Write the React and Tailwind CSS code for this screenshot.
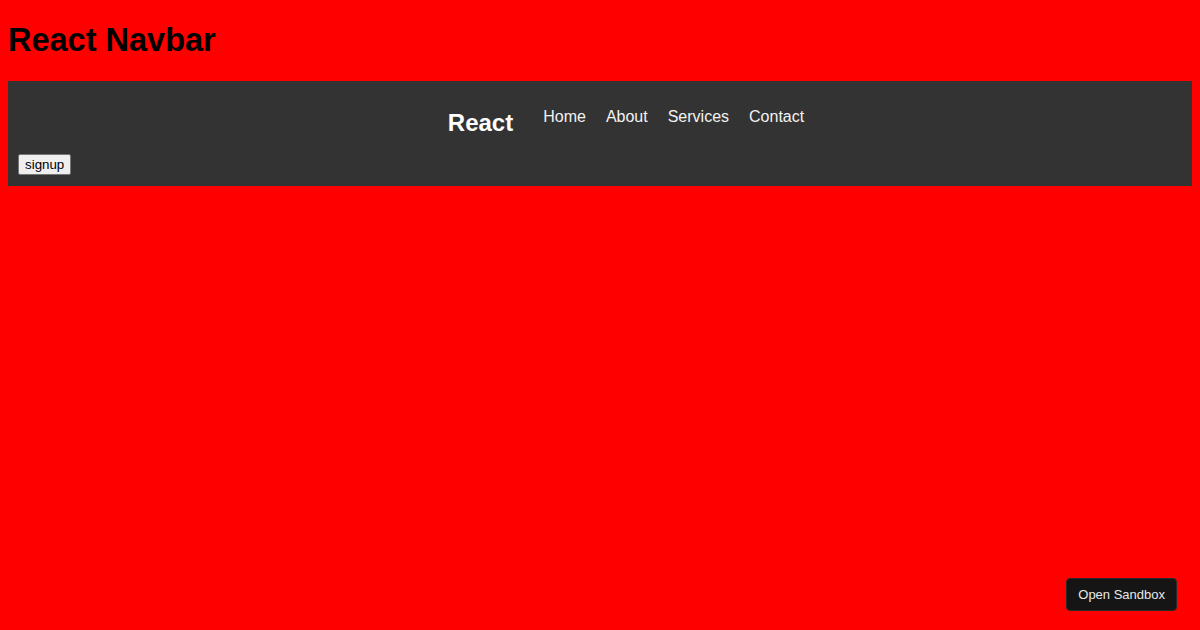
import React from "react";

const LINKS = ["Home", "About", "Services", "Contact"];

export default function App() {
  return (
    <div className="min-h-screen bg-[#ff0000] px-2 pt-2 font-['Liberation_Sans',Arial,sans-serif] text-black">
      <h1 className="mt-[14px] mb-[22px] text-[32.5px] font-bold leading-[37px]">
        React Navbar
      </h1>

      {/* navbar */}
      <nav className="bg-[#333333] p-[10px] pb-[11px]">
        <div className="flex h-[63px] items-start justify-center pl-[52px]">
          <div className="mt-[18px] text-[24px] font-bold leading-[28px] text-white">
            React
          </div>
          <ul className="ml-[30px] mt-[14px] flex gap-5">
            {LINKS.map((l) => (
              <li key={l}>
                <a href="#" className="text-[16px] leading-[18px] text-[#f2f2f2]">
                  {l}
                </a>
              </li>
            ))}
          </ul>
        </div>
        <button
          type="button"
          className="block h-[21px] rounded-[2px] border border-[#767676] bg-[#efefef] px-[6px] text-[13.33px] leading-[15px] text-black"
        >
          signup
        </button>
      </nav>

      <button
        type="button"
        className="fixed bottom-[19px] right-[23px] h-[33px] rounded-[4px] border border-[#2a2a2a] bg-[#151515] px-[11px] text-[13px] text-[#e8e8e8]"
      >
        Open Sandbox
      </button>
    </div>
  );
}
